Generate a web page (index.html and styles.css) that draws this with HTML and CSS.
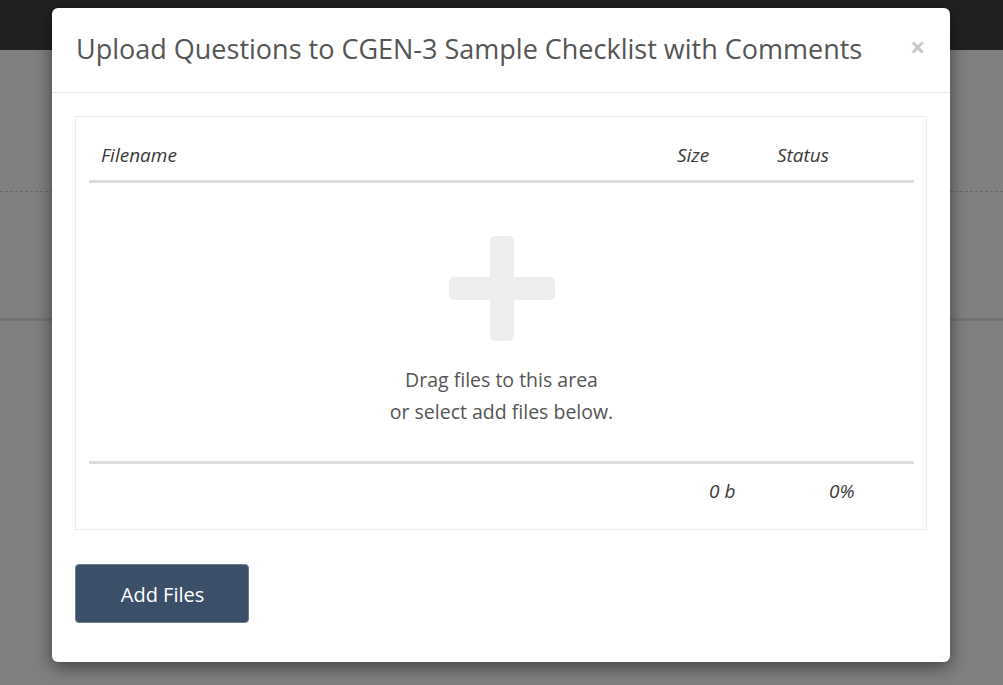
FILE: index.html
```html
<!DOCTYPE html>
<html>
<head>
<meta charset="utf-8">
<link rel="stylesheet" href="styles.css">
</head>
<body>
<div class="page">
  <div class="topbar"></div>
  <div class="band"></div>
  <div class="band2"></div>
</div>
<div class="modal">
  <div class="modal-header">
    <h4 class="modal-title">Upload Questions to CGEN-3 Sample Checklist with Comments</h4>
    <span class="close">&times;</span>
  </div>
  <div class="modal-body">
    <div class="uploader">
      <div class="row head">
        <div class="col name">Filename</div>
        <div class="col size">Size</div>
        <div class="col status">Status</div>
      </div>
      <div class="drop">
        <svg class="plus" width="106" height="105" viewBox="0 0 106 105">
          <rect x="41" y="0" width="24" height="105" rx="5" fill="#eeeeee"/>
          <rect x="0" y="41" width="106" height="23" rx="5" fill="#eeeeee"/>
        </svg>
        <p class="drop-text">Drag files to this area<br>or select add files below.</p>
      </div>
      <div class="row foot">
        <div class="col name"></div>
        <div class="col size fsize">0 b</div>
        <div class="col status fstatus">0%</div>
      </div>
    </div>
    <button class="btn">Add Files</button>
  </div>
</div>
</body>
</html>
```
FILE: styles.css
```css
html, body {
  margin: 0;
  padding: 0;
}
body {
  background: #808080;
  font-family: "Open Sans", "Liberation Sans", sans-serif;
  height: 685px;
  overflow: hidden;
}
.topbar {
  height: 50px;
  background: #212121;
}
.band {
  height: 141px;
  border-bottom: 1px dashed #6a6a6a;
}
.band2 {
  height: 126px;
  border-bottom: 3px solid #747474;
}
.modal {
  position: absolute;
  left: 52px;
  top: 8px;
  width: 898px;
  height: 654px;
  background: #fff;
  border-radius: 6px;
  box-shadow: 0 5px 18px rgba(0, 0, 0, 0.5);
  display: flex;
  flex-direction: column;
}
.modal-header {
  height: 84px;
  border-bottom: 1px solid #e5e5e5;
  display: flex;
  align-items: center;
  justify-content: space-between;
  padding: 0 24px 0 24px;
}
.modal-title {
  margin: 0;
  font-size: 27px;
  font-weight: 400;
  color: #555;
  line-height: 36px;
  padding-bottom: 2px;
}
.close {
  font-size: 26px;
  font-weight: 700;
  color: #c8c8c8;
  line-height: 20px;
  margin-right: 1px;
  margin-bottom: 6px;
}
.modal-body {
  padding: 23px 23px 0 23px;
}
.uploader {
  border: 1px solid #e2eef8;
  padding: 13px 12px 11px 13px;
}
.row {
  display: flex;
}
.row.head {
  height: 50px;
  border-bottom: 3px solid #dddddd;
  align-items: center;
}
.col {
  font-size: 19px;
  font-style: italic;
  color: #3a3a3a;
  padding-left: 12px;
  box-sizing: border-box;
}
.col.name {
  width: 576px;
}
.col.size {
  width: 100px;
}
.col.status {
  width: 149px;
}
.drop {
  height: 281px;
  border-bottom: 3px solid #dddddd;
  display: flex;
  flex-direction: column;
  align-items: center;
  padding-top: 53px;
  box-sizing: border-box;
}
.plus {
  display: block;
}
.drop-text {
  margin: 23px 0 0 0;
  font-size: 19.5px;
  line-height: 32px;
  color: #555;
  text-align: center;
}
.row.foot {
  height: 54px;
  align-items: center;
}
.col.fsize {
  padding-left: 44px;
}
.col.fstatus {
  padding-left: 64px;
}
.btn {
  margin-top: 34px;
  width: 174px;
  height: 59px;
  background: #3b5068;
  border: 1px solid #6e7d8c;
  border-radius: 4px;
  color: #fff;
  font-family: "Open Sans", "Liberation Sans", sans-serif;
  font-size: 20px;
  padding: 2px 0 0 1px;
}
```
